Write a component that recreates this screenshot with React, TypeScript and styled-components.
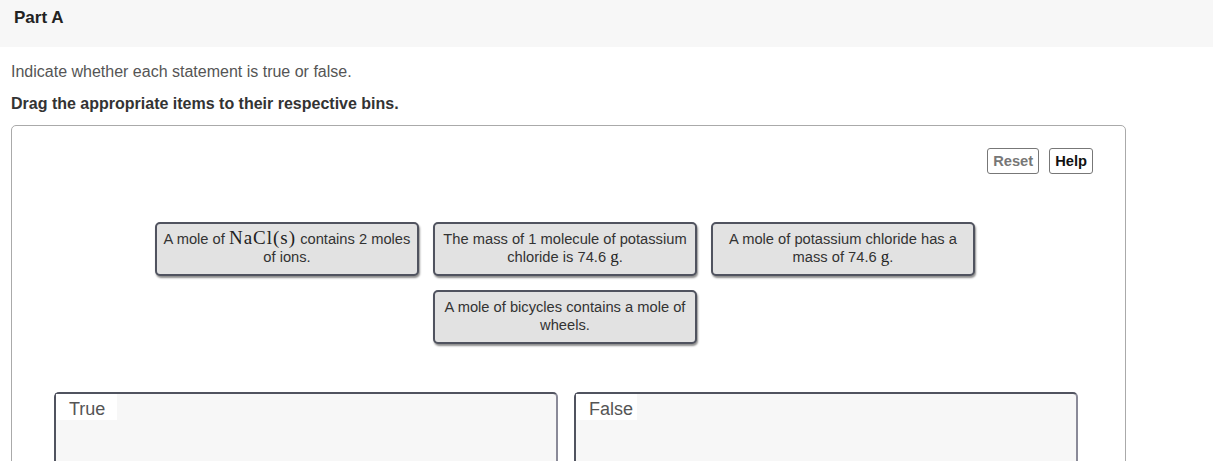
import React from 'react';
import styled, { createGlobalStyle } from 'styled-components';

const GlobalStyle = createGlobalStyle`
  body {
    margin: 0;
    background: #fff;
    font-family: "Liberation Sans", Arial, sans-serif;
    color: #333;
  }
`;

const Header = styled.div`
  height: 47px;
  background: #f7f7f7;
  padding: 8px 14px 0;
  box-sizing: border-box;
  font-size: 17px;
  line-height: 20px;
  font-weight: bold;
  color: #222;
`;

const Body = styled.div`
  padding: 15px 11px 0;
`;

const Intro = styled.p`
  margin: 0 0 12px;
  font-size: 16px;
  line-height: 20px;
  color: #555;
`;

const Instruction = styled.p`
  margin: 0 0 11px;
  font-size: 16px;
  line-height: 20px;
  font-weight: bold;
  color: #333;
`;

const Board = styled.div`
  width: 1115px;
  height: 360px;
  box-sizing: border-box;
  border: 1px solid #aaa;
  border-radius: 5px;
  padding: 22px 32px 0 42px;
`;

const Toolbar = styled.div`
  display: flex;
  justify-content: flex-end;
  gap: 10px;
`;

const ToolButton = styled.button<{ $muted?: boolean }>`
  height: 26px;
  padding: 0 5px;
  background: #fff;
  border: 1px solid #777;
  border-radius: 3px;
  font-family: "Liberation Sans", Arial, sans-serif;
  font-size: 14.7px;
  font-weight: bold;
  color: ${(p) => (p.$muted ? '#777' : '#111')};
`;

const Pool = styled.div`
  display: flex;
  flex-wrap: wrap;
  justify-content: center;
  gap: 14px;
  width: 820px;
  margin: 48px 0 0 101px;
`;

const Item = styled.div`
  width: 264px;
  height: 54px;
  box-sizing: border-box;
  padding: 6px 2px 0;
  background: #e2e2e2;
  border: 2px solid #50535f;
  border-radius: 5px;
  box-shadow: 1px 2px 2px rgba(0, 0, 0, 0.45);
  text-align: center;
  font-size: 14.7px;
  line-height: 18px;
  color: #333;
`;

const Math = styled.span<{ $small?: boolean }>`
  font-family: "Liberation Serif", "Times New Roman", serif;
  font-size: ${(p) => (p.$small ? '17px' : '19px')};
  line-height: 14px;
  letter-spacing: ${(p) => (p.$small ? '0' : '1px')};
  color: #222;
`;

const Bins = styled.div`
  display: flex;
  gap: 16px;
  margin-top: 48px;
`;

const Bin = styled.div`
  width: 504px;
  height: 120px;
  box-sizing: border-box;
  background: #f7f7f7;
  border: 2px solid #50535f;
  border-right-color: #8a8a98;
  border-bottom-color: #8a8a98;
  border-radius: 5px;
`;

const BinLabel = styled.div`
  display: inline-block;
  width: 61px;
  height: 26px;
  box-sizing: border-box;
  padding: 5px 0 0 13px;
  background: #fff;
  font-size: 18px;
  line-height: 20px;
  color: #555;
`;

export default function App() {
  return (
    <>
      <GlobalStyle />
      <Header>Part A</Header>
      <Body>
        <Intro>Indicate whether each statement is true or false.</Intro>
        <Instruction>Drag the appropriate items to their respective bins.</Instruction>
        <Board>
          <Toolbar>
            <ToolButton $muted>Reset</ToolButton>
            <ToolButton>Help</ToolButton>
          </Toolbar>
          <Pool>
            <Item>
              A mole of <Math>NaCl(s)</Math> contains 2 moles of ions.
            </Item>
            <Item>
              The mass of 1 molecule of potassium chloride is 74.6 <Math $small>g</Math>.
            </Item>
            <Item>
              A mole of potassium chloride has a mass of 74.6 <Math $small>g</Math>.
            </Item>
            <Item>A mole of bicycles contains a mole of wheels.</Item>
          </Pool>
          <Bins>
            <Bin>
              <BinLabel>True</BinLabel>
            </Bin>
            <Bin>
              <BinLabel>False</BinLabel>
            </Bin>
          </Bins>
        </Board>
      </Body>
    </>
  );
}
